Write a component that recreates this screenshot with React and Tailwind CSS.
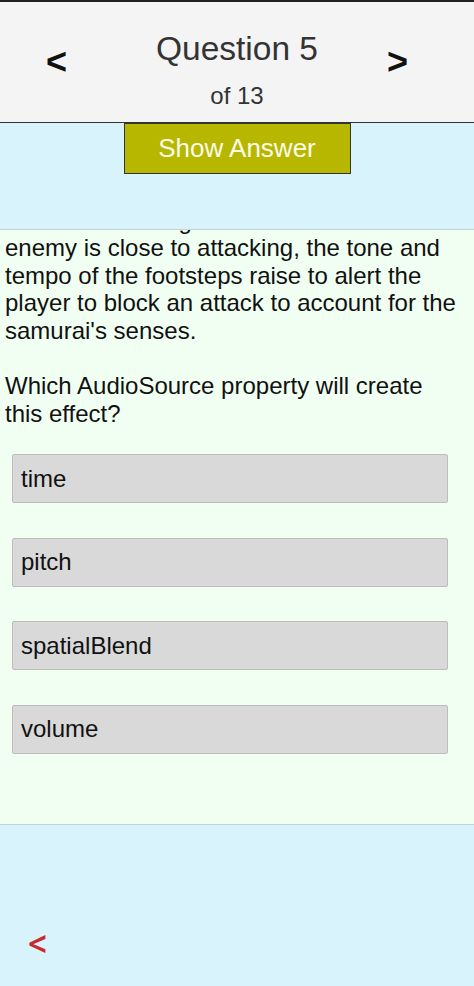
const options = ['time', 'pitch', 'spatialBlend', 'volume'];

export default function App() {
  return (
    <div className="flex h-[986px] w-[474px] flex-col overflow-hidden font-['Liberation_Sans',Arial,sans-serif] leading-[1.15]">
      {/* header */}
      <div className="flex h-[123px] shrink-0 items-start border-t-[2px] border-b border-t-[#222] border-b-[#333] bg-[#f4f4f4] pt-[28px]">
        <div className="w-[90px] pl-[46px] pt-[11px] text-[36px] font-bold text-[#111]">&lt;</div>
        <div className="flex flex-1 flex-col items-center text-[#333]">
          <div className="text-[33.5px]">Question 5</div>
          <div className="mt-[13px] text-[24px]">of 13</div>
        </div>
        <div className="w-[90px] pl-[3px] pt-[11px] text-[36px] font-bold text-[#111]">&gt;</div>
      </div>

      {/* answer bar */}
      <div className="flex h-[106px] shrink-0 justify-center bg-[#d9f3fd]">
        <button className="h-[51px] w-[227px] border border-[#333] bg-[#b7b700] text-[26px] text-[#fbfbec]">
          Show Answer
        </button>
      </div>

      {/* question body, scrolled */}
      <div className="h-[596px] shrink-0 overflow-hidden border-y border-[#c5d3d3] bg-[#f1fff3]">
        <p className="mt-[-51px] pl-[5px] pr-[15px] text-[24px] text-[#111]">
          In a samurai game, foes stalk the player while the sound grows louder. When the enemy is close to
          attacking, the tone and tempo of the footsteps raise to alert the player to block an attack to account
          for the samurai's senses.
          <br />
          <br />
          Which AudioSource property will create this effect?
        </p>
        <div className="mt-[27px] flex flex-col gap-[34.4px]">
          {options.map((o) => (
            <div
              key={o}
              className="ml-[12px] flex h-[49px] w-[436px] items-center rounded-[2px] border border-[#bdbdbd] bg-[#d9d9d9] pl-[8px] text-[24px] text-[#111]"
            >
              {o}
            </div>
          ))}
        </div>
      </div>

      {/* footer */}
      <div className="flex flex-1 items-end bg-[#d9f3fd] pb-[19px] pl-[28px]">
        <span className="font-['Roboto',sans-serif] text-[40px] text-[#cc2a2a]">&lt;</span>
      </div>
    </div>
  );
}
